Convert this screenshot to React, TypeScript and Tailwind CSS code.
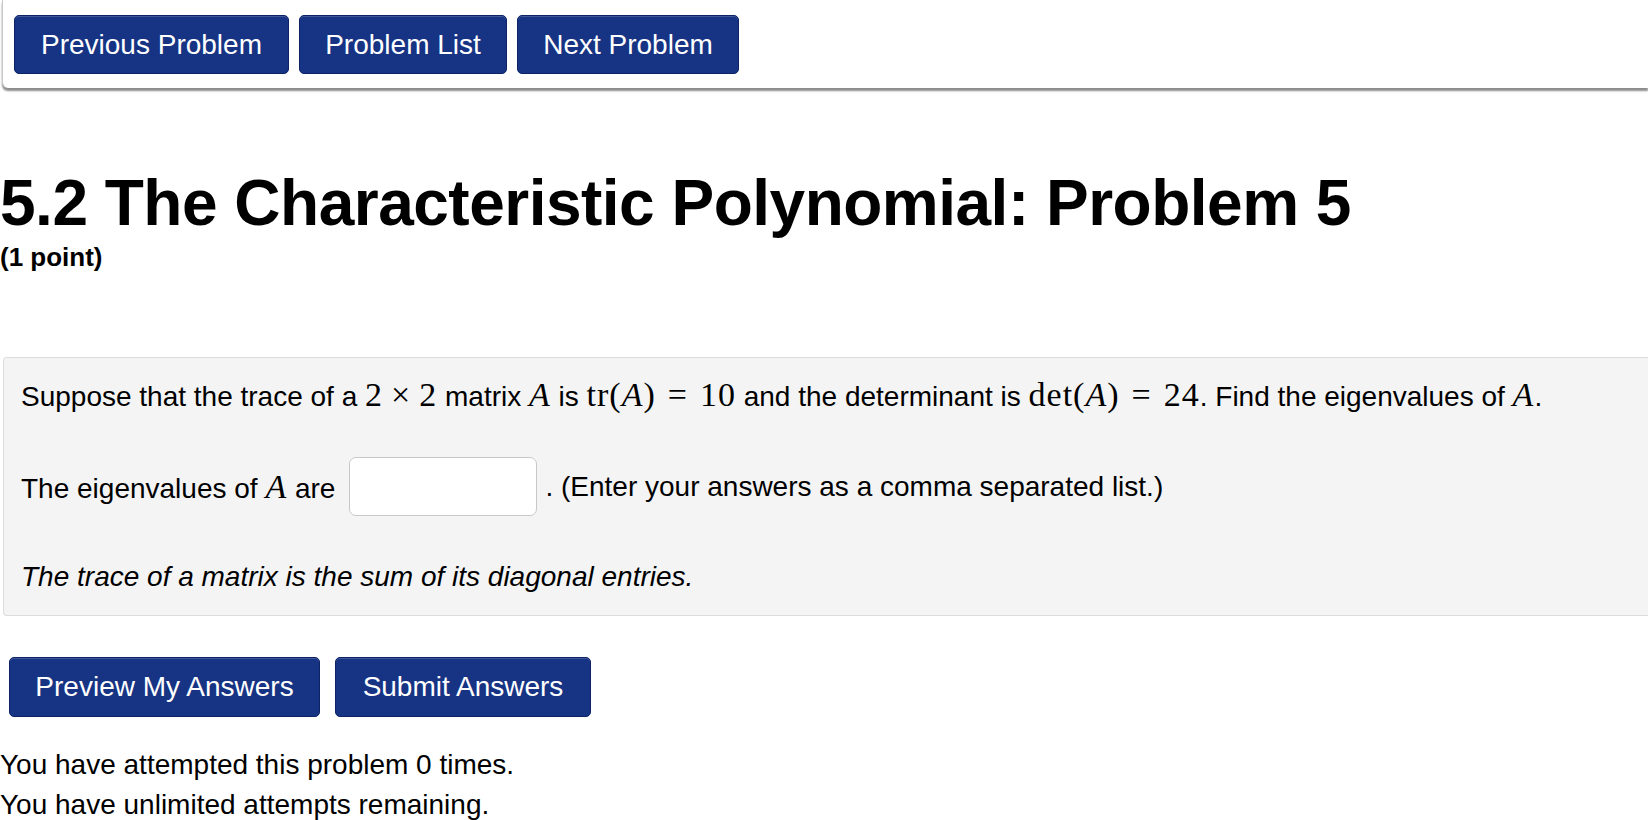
export default function App() {
  const btn =
    "rounded-[5px] border border-[#0c2366] bg-[#163384] text-white text-[28px] leading-none shadow-[inset_0_1px_0_rgba(255,255,255,0.18)]";
  const math = "font-['Liberation_Serif','DejaVu_Serif',serif] text-[34px] tracking-[1px]";
  return (
    <div className="min-h-[820px] w-[1648px] overflow-hidden bg-white font-['Liberation_Sans',Arial,sans-serif] text-black">
      {/* nav bar */}
      <div className="ml-[2px] flex h-[88px] items-start gap-[10px] rounded-bl-[6px] border-l border-[#c8c8c8] bg-white pl-[11px] pt-[15px] shadow-[0_3px_2px_rgba(0,0,0,0.45)]">
        <button className={`${btn} h-[59px] w-[275px]`}>Previous Problem</button>
        <button className={`${btn} h-[59px] w-[208px]`}>Problem List</button>
        <button className={`${btn} h-[59px] w-[222px]`}>Next Problem</button>
      </div>

      <h1 className="mt-[79px] text-[64px] font-bold leading-[72px] tracking-[-0.5px]">
        5.2 The Characteristic Polynomial: Problem 5
      </h1>
      <div className="mt-[3px] text-[26px] font-bold leading-[30px]">(1 point)</div>

      {/* problem body */}
      <div className="ml-[3px] mt-[85px] h-[259px] rounded-l-[4px] border border-r-0 border-[#dcdcdc] bg-[#f4f4f4] pl-[17px] pt-[17px] text-[28px]">
        <p className="h-[40px] whitespace-nowrap leading-[40px]">
          Suppose that the trace of a{" "}
          <span className={math}>
            2<span className="mx-[8px]">×</span>2
          </span>{" "}
          matrix <span className={`${math} italic`}>A</span> is{" "}
          <span className={math}>
            tr(<i>A</i>)<span className="mx-[12px]">=</span>10
          </span>{" "}
          and the determinant is{" "}
          <span className={math}>
            det(<i>A</i>)<span className="mx-[12px]">=</span>24
          </span>
          . Find the eigenvalues of <span className={`${math} italic`}>A</span>.
        </p>
        <div className="mt-[42px] flex h-[59px] items-center">
          <span>
            The eigenvalues of <span className={`${math} italic`}>A</span> are
          </span>
          <input
            type="text"
            className="ml-[14px] h-[59px] w-[188px] rounded-[7px] border border-[#c8c8c8] bg-white"
          />
          <span className="ml-[8px]">. (Enter your answers as a comma separated list.)</span>
        </div>
        <p className="mt-[41px] italic leading-[40px]">The trace of a matrix is the sum of its diagonal entries.</p>
      </div>

      <div className="ml-[9px] mt-[41px] flex gap-[15px]">
        <button className={`${btn} h-[60px] w-[311px]`}>Preview My Answers</button>
        <button className={`${btn} h-[60px] w-[256px]`}>Submit Answers</button>
      </div>

      <div className="mt-[28px] text-[28px] leading-[40px]">
        <div>You have attempted this problem 0 times.</div>
        <div>You have unlimited attempts remaining.</div>
      </div>
    </div>
  );
}
